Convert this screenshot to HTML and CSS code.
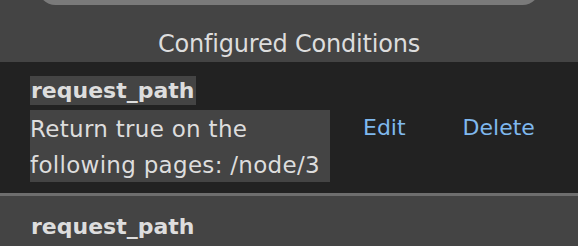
FILE: index.html
```html
<!DOCTYPE html>
<html lang="en">
  <head>
    <meta charset="utf-8" />
    <meta name="viewport" content="width=device-width, initial-scale=1.0" />
    <title>Configured Conditions</title>
    <link rel="stylesheet" href="styles.css">
  </head>
  <body>
      <div class="top">
          <div class="field"></div>
          <h2 class="heading">Configured Conditions</h2>
      </div>

      <div class="condition">
          <div class="info">
              <span class="name">request_path</span>
              <p class="summary">Return true on the<br>following pages: /node/3</p>
          </div>
          <a class="action edit" href="#">Edit</a>
          <a class="action delete" href="#">Delete</a>
      </div>

      <div class="condition next">
          <div class="info">
              <span class="name">request_path</span>
          </div>
      </div>
  </body>
</html>
```

FILE: styles.css
```css
body {
    margin: 0;
    background: #444444;
    font-family: "DejaVu Sans", sans-serif;
    color: #dddddd;
}

.top {
    height: 62px;
    overflow: hidden;
}

.field {
    margin: -30px 38px 0 38px;
    height: 35px;
    background: #7a7a7a;
    border-radius: 18px;
}

.heading {
    margin: 0;
    padding-top: 27px;
    font-size: 24px;
    letter-spacing: -0.2px;
    font-weight: normal;
    text-align: center;
    line-height: 24px;
}

.condition {
    display: flex;
    align-items: flex-start;
    background: #222222;
    padding: 14px 0 11px 30px;
}

.info {
    width: 300px;
}

.name {
    display: inline-block;
    background: #444444;
    font-weight: bold;
    font-size: 22px;
    line-height: 29px;
    padding: 0 1px;
}

.summary {
    margin: 5px 0 0 0;
    padding-top: 1px;
    height: 71px;
    background: #444444;
    font-size: 23px;
    letter-spacing: 0.3px;
    line-height: 36px;
    white-space: nowrap;
}

.action {
    color: #7fb8ee;
    text-decoration: none;
    font-size: 22px;
    line-height: 36px;
    margin-top: 34px;
}

.edit {
    margin-left: 33px;
}

.delete {
    margin-left: 57px;
}

.next {
    background: #444444;
    border-top: 3px solid #6e6e6e;
    padding-top: 16px;
}
```
